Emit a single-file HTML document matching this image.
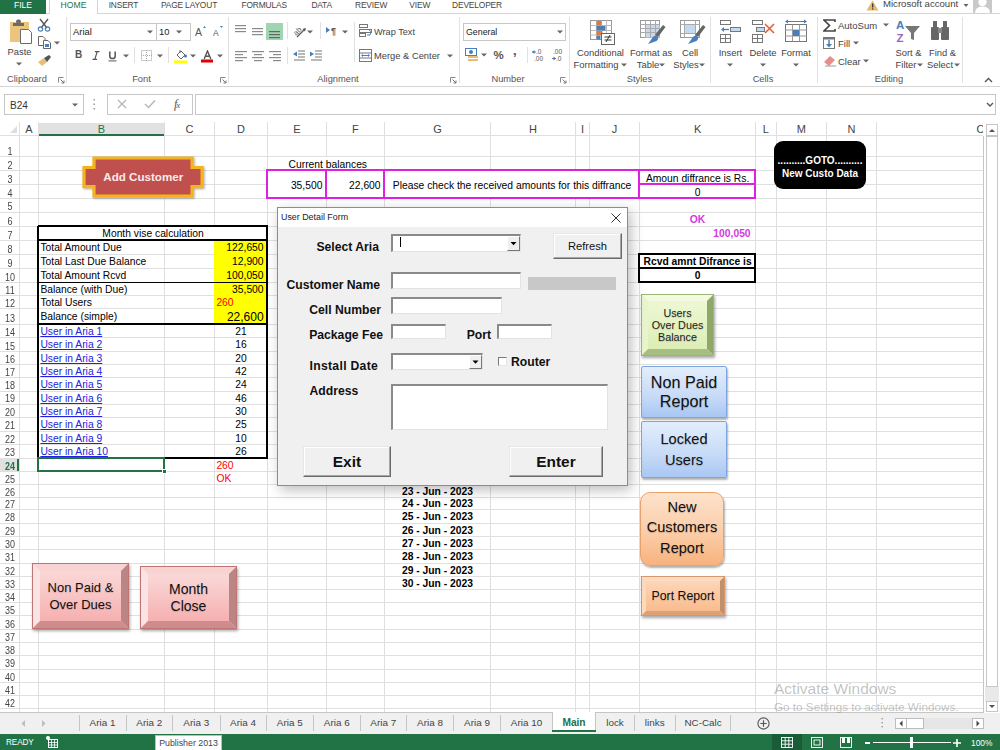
<!DOCTYPE html><html><head><meta charset="utf-8"><style>
*{margin:0;padding:0;box-sizing:border-box}
html,body{width:1000px;height:750px;overflow:hidden;background:#fff;font-family:"Liberation Sans", sans-serif;}
body{position:relative}
</style></head><body>
<svg style="position:absolute;left:0;top:0" width="1000" height="750" shape-rendering="crispEdges"><rect x="19" y="122" width="1" height="590" fill="#DFDFDF"/><rect x="38" y="122" width="1" height="590" fill="#DFDFDF"/><rect x="164" y="122" width="1" height="590" fill="#DFDFDF"/><rect x="214" y="122" width="1" height="590" fill="#DFDFDF"/><rect x="267" y="122" width="1" height="590" fill="#DFDFDF"/><rect x="326" y="122" width="1" height="590" fill="#DFDFDF"/><rect x="384" y="122" width="1" height="590" fill="#DFDFDF"/><rect x="490" y="122" width="1" height="590" fill="#DFDFDF"/><rect x="575" y="122" width="1" height="590" fill="#DFDFDF"/><rect x="589" y="122" width="1" height="590" fill="#DFDFDF"/><rect x="639" y="122" width="1" height="590" fill="#DFDFDF"/><rect x="755" y="122" width="1" height="590" fill="#DFDFDF"/><rect x="776" y="122" width="1" height="590" fill="#DFDFDF"/><rect x="826" y="122" width="1" height="590" fill="#DFDFDF"/><rect x="876" y="122" width="1" height="590" fill="#DFDFDF"/><rect x="0" y="135" width="983.5" height="1" fill="#DFDFDF"/><rect x="0" y="156" width="983.5" height="1" fill="#DFDFDF"/><rect x="0" y="170" width="983.5" height="1" fill="#DFDFDF"/><rect x="0" y="184" width="983.5" height="1" fill="#DFDFDF"/><rect x="0" y="198" width="983.5" height="1" fill="#DFDFDF"/><rect x="0" y="212" width="983.5" height="1" fill="#DFDFDF"/><rect x="0" y="226" width="983.5" height="1" fill="#DFDFDF"/><rect x="0" y="240" width="983.5" height="1" fill="#DFDFDF"/><rect x="0" y="254" width="983.5" height="1" fill="#DFDFDF"/><rect x="0" y="268" width="983.5" height="1" fill="#DFDFDF"/><rect x="0" y="282" width="983.5" height="1" fill="#DFDFDF"/><rect x="0" y="295" width="983.5" height="1" fill="#DFDFDF"/><rect x="0" y="308" width="983.5" height="1" fill="#DFDFDF"/><rect x="0" y="324" width="983.5" height="1" fill="#DFDFDF"/><rect x="0" y="337" width="983.5" height="1" fill="#DFDFDF"/><rect x="0" y="351" width="983.5" height="1" fill="#DFDFDF"/><rect x="0" y="364" width="983.5" height="1" fill="#DFDFDF"/><rect x="0" y="377" width="983.5" height="1" fill="#DFDFDF"/><rect x="0" y="391" width="983.5" height="1" fill="#DFDFDF"/><rect x="0" y="404" width="983.5" height="1" fill="#DFDFDF"/><rect x="0" y="417" width="983.5" height="1" fill="#DFDFDF"/><rect x="0" y="431" width="983.5" height="1" fill="#DFDFDF"/><rect x="0" y="444" width="983.5" height="1" fill="#DFDFDF"/><rect x="0" y="458" width="983.5" height="1" fill="#DFDFDF"/><rect x="0" y="471" width="983.5" height="1" fill="#DFDFDF"/><rect x="0" y="484" width="983.5" height="1" fill="#DFDFDF"/><rect x="0" y="497" width="983.5" height="1" fill="#DFDFDF"/><rect x="0" y="509" width="983.5" height="1" fill="#DFDFDF"/><rect x="0" y="523" width="983.5" height="1" fill="#DFDFDF"/><rect x="0" y="536" width="983.5" height="1" fill="#DFDFDF"/><rect x="0" y="549" width="983.5" height="1" fill="#DFDFDF"/><rect x="0" y="563" width="983.5" height="1" fill="#DFDFDF"/><rect x="0" y="576" width="983.5" height="1" fill="#DFDFDF"/><rect x="0" y="589" width="983.5" height="1" fill="#DFDFDF"/><rect x="0" y="602" width="983.5" height="1" fill="#DFDFDF"/><rect x="0" y="615" width="983.5" height="1" fill="#DFDFDF"/><rect x="0" y="629" width="983.5" height="1" fill="#DFDFDF"/><rect x="0" y="642" width="983.5" height="1" fill="#DFDFDF"/><rect x="0" y="655" width="983.5" height="1" fill="#DFDFDF"/><rect x="0" y="669" width="983.5" height="1" fill="#DFDFDF"/><rect x="0" y="682" width="983.5" height="1" fill="#DFDFDF"/><rect x="0" y="695" width="983.5" height="1" fill="#DFDFDF"/><rect x="0" y="708" width="983.5" height="1" fill="#DFDFDF"/></svg><div style="position:absolute;left:19.4px;top:122px;width:19.0px;height:14px;display:flex;align-items:center;justify-content:center;font-size:11px;color:#444;line-height:1">A</div><div style="position:absolute;left:39px;top:123px;width:125px;height:13px;background:#E1E1E1;border-bottom:2px solid #217346"></div><div style="position:absolute;left:38.4px;top:122px;width:126.19999999999999px;height:14px;display:flex;align-items:center;justify-content:center;font-size:11px;color:#217346;line-height:1">B</div><div style="position:absolute;left:164.6px;top:122px;width:49.80000000000001px;height:14px;display:flex;align-items:center;justify-content:center;font-size:11px;color:#444;line-height:1">C</div><div style="position:absolute;left:214.4px;top:122px;width:53.20000000000002px;height:14px;display:flex;align-items:center;justify-content:center;font-size:11px;color:#444;line-height:1">D</div><div style="position:absolute;left:267.6px;top:122px;width:58.799999999999955px;height:14px;display:flex;align-items:center;justify-content:center;font-size:11px;color:#444;line-height:1">E</div><div style="position:absolute;left:326.4px;top:122px;width:58.200000000000045px;height:14px;display:flex;align-items:center;justify-content:center;font-size:11px;color:#444;line-height:1">F</div><div style="position:absolute;left:384.6px;top:122px;width:105.79999999999995px;height:14px;display:flex;align-items:center;justify-content:center;font-size:11px;color:#444;line-height:1">G</div><div style="position:absolute;left:490.4px;top:122px;width:85.20000000000005px;height:14px;display:flex;align-items:center;justify-content:center;font-size:11px;color:#444;line-height:1">H</div><div style="position:absolute;left:575.6px;top:122px;width:14.0px;height:14px;display:flex;align-items:center;justify-content:center;font-size:11px;color:#444;line-height:1">I</div><div style="position:absolute;left:589.6px;top:122px;width:50.0px;height:14px;display:flex;align-items:center;justify-content:center;font-size:11px;color:#444;line-height:1">J</div><div style="position:absolute;left:639.6px;top:122px;width:116.0px;height:14px;display:flex;align-items:center;justify-content:center;font-size:11px;color:#444;line-height:1">K</div><div style="position:absolute;left:755.6px;top:122px;width:20.649999999999977px;height:14px;display:flex;align-items:center;justify-content:center;font-size:11px;color:#444;line-height:1">L</div><div style="position:absolute;left:776.25px;top:122px;width:50.0px;height:14px;display:flex;align-items:center;justify-content:center;font-size:11px;color:#444;line-height:1">M</div><div style="position:absolute;left:826.25px;top:122px;width:50.35000000000002px;height:14px;display:flex;align-items:center;justify-content:center;font-size:11px;color:#444;line-height:1">N</div><div style="position:absolute;left:876.6px;top:122px;width:208.39999999999998px;height:14px;display:flex;align-items:center;justify-content:center;font-size:11px;color:#444;line-height:1">O</div><svg style="position:absolute;left:0;top:122px" width="19" height="14"><polygon points="17,4 17,11 10,11" fill="#DDDDDD"/></svg><div style="position:absolute;left:0;top:136.5px;width:20px;height:21.400000000000006px;display:flex;align-items:flex-end;padding-bottom:1px;justify-content:center;font-size:10.8px;color:#444;font-weight:400;line-height:1;transform:scaleX(0.83)">1</div><div style="position:absolute;left:0;top:157.9px;width:20px;height:13.799999999999983px;display:flex;align-items:flex-end;padding-bottom:1px;justify-content:center;font-size:10.8px;color:#444;font-weight:400;line-height:1;transform:scaleX(0.83)">2</div><div style="position:absolute;left:0;top:171.7px;width:20px;height:14.0px;display:flex;align-items:flex-end;padding-bottom:1px;justify-content:center;font-size:10.8px;color:#444;font-weight:400;line-height:1;transform:scaleX(0.83)">3</div><div style="position:absolute;left:0;top:185.7px;width:20px;height:14.0px;display:flex;align-items:flex-end;padding-bottom:1px;justify-content:center;font-size:10.8px;color:#444;font-weight:400;line-height:1;transform:scaleX(0.83)">4</div><div style="position:absolute;left:0;top:199.7px;width:20px;height:13.400000000000006px;display:flex;align-items:flex-end;padding-bottom:1px;justify-content:center;font-size:10.8px;color:#444;font-weight:400;line-height:1;transform:scaleX(0.83)">5</div><div style="position:absolute;left:0;top:213.1px;width:20px;height:14.5px;display:flex;align-items:flex-end;padding-bottom:1px;justify-content:center;font-size:10.8px;color:#444;font-weight:400;line-height:1;transform:scaleX(0.83)">6</div><div style="position:absolute;left:0;top:227.6px;width:20px;height:13.900000000000006px;display:flex;align-items:flex-end;padding-bottom:1px;justify-content:center;font-size:10.8px;color:#444;font-weight:400;line-height:1;transform:scaleX(0.83)">7</div><div style="position:absolute;left:0;top:241.5px;width:20px;height:14.199999999999989px;display:flex;align-items:flex-end;padding-bottom:1px;justify-content:center;font-size:10.8px;color:#444;font-weight:400;line-height:1;transform:scaleX(0.83)">8</div><div style="position:absolute;left:0;top:255.7px;width:20px;height:13.800000000000011px;display:flex;align-items:flex-end;padding-bottom:1px;justify-content:center;font-size:10.8px;color:#444;font-weight:400;line-height:1;transform:scaleX(0.83)">9</div><div style="position:absolute;left:0;top:269.5px;width:20px;height:13.800000000000011px;display:flex;align-items:flex-end;padding-bottom:1px;justify-content:center;font-size:10.8px;color:#444;font-weight:400;line-height:1;transform:scaleX(0.83)">10</div><div style="position:absolute;left:0;top:283.3px;width:20px;height:13.099999999999966px;display:flex;align-items:flex-end;padding-bottom:1px;justify-content:center;font-size:10.8px;color:#444;font-weight:400;line-height:1;transform:scaleX(0.83)">11</div><div style="position:absolute;left:0;top:296.4px;width:20px;height:13.300000000000011px;display:flex;align-items:flex-end;padding-bottom:1px;justify-content:center;font-size:10.8px;color:#444;font-weight:400;line-height:1;transform:scaleX(0.83)">12</div><div style="position:absolute;left:0;top:309.7px;width:20px;height:15.300000000000011px;display:flex;align-items:flex-end;padding-bottom:1px;justify-content:center;font-size:10.8px;color:#444;font-weight:400;line-height:1;transform:scaleX(0.83)">13</div><div style="position:absolute;left:0;top:325.0px;width:20px;height:13.800000000000011px;display:flex;align-items:flex-end;padding-bottom:1px;justify-content:center;font-size:10.8px;color:#444;font-weight:400;line-height:1;transform:scaleX(0.83)">14</div><div style="position:absolute;left:0;top:338.8px;width:20px;height:13.5px;display:flex;align-items:flex-end;padding-bottom:1px;justify-content:center;font-size:10.8px;color:#444;font-weight:400;line-height:1;transform:scaleX(0.83)">15</div><div style="position:absolute;left:0;top:352.3px;width:20px;height:13.300000000000011px;display:flex;align-items:flex-end;padding-bottom:1px;justify-content:center;font-size:10.8px;color:#444;font-weight:400;line-height:1;transform:scaleX(0.83)">16</div><div style="position:absolute;left:0;top:365.6px;width:20px;height:13.0px;display:flex;align-items:flex-end;padding-bottom:1px;justify-content:center;font-size:10.8px;color:#444;font-weight:400;line-height:1;transform:scaleX(0.83)">17</div><div style="position:absolute;left:0;top:378.6px;width:20px;height:13.599999999999966px;display:flex;align-items:flex-end;padding-bottom:1px;justify-content:center;font-size:10.8px;color:#444;font-weight:400;line-height:1;transform:scaleX(0.83)">18</div><div style="position:absolute;left:0;top:392.2px;width:20px;height:13.100000000000023px;display:flex;align-items:flex-end;padding-bottom:1px;justify-content:center;font-size:10.8px;color:#444;font-weight:400;line-height:1;transform:scaleX(0.83)">19</div><div style="position:absolute;left:0;top:405.3px;width:20px;height:13.199999999999989px;display:flex;align-items:flex-end;padding-bottom:1px;justify-content:center;font-size:10.8px;color:#444;font-weight:400;line-height:1;transform:scaleX(0.83)">20</div><div style="position:absolute;left:0;top:418.5px;width:20px;height:13.5px;display:flex;align-items:flex-end;padding-bottom:1px;justify-content:center;font-size:10.8px;color:#444;font-weight:400;line-height:1;transform:scaleX(0.83)">21</div><div style="position:absolute;left:0;top:432.0px;width:20px;height:13.5px;display:flex;align-items:flex-end;padding-bottom:1px;justify-content:center;font-size:10.8px;color:#444;font-weight:400;line-height:1;transform:scaleX(0.83)">22</div><div style="position:absolute;left:0;top:445.5px;width:20px;height:13.600000000000023px;display:flex;align-items:flex-end;padding-bottom:1px;justify-content:center;font-size:10.8px;color:#444;font-weight:400;line-height:1;transform:scaleX(0.83)">23</div><div style="position:absolute;left:0px;top:459px;width:19px;height:12px;background:#E1E1E1;border-right:2px solid #217346"></div><div style="position:absolute;left:0;top:459.1px;width:20px;height:13.399999999999977px;display:flex;align-items:flex-end;padding-bottom:1px;justify-content:center;font-size:10.8px;color:#217346;font-weight:700;line-height:1;transform:scaleX(0.83)">24</div><div style="position:absolute;left:0;top:472.5px;width:20px;height:13.100000000000023px;display:flex;align-items:flex-end;padding-bottom:1px;justify-content:center;font-size:10.8px;color:#444;font-weight:400;line-height:1;transform:scaleX(0.83)">25</div><div style="position:absolute;left:0;top:485.6px;width:20px;height:13.199999999999989px;display:flex;align-items:flex-end;padding-bottom:1px;justify-content:center;font-size:10.8px;color:#444;font-weight:400;line-height:1;transform:scaleX(0.83)">26</div><div style="position:absolute;left:0;top:498.8px;width:20px;height:11.599999999999966px;display:flex;align-items:flex-end;padding-bottom:1px;justify-content:center;font-size:10.8px;color:#444;font-weight:400;line-height:1;transform:scaleX(0.83)">27</div><div style="position:absolute;left:0;top:510.4px;width:20px;height:13.600000000000023px;display:flex;align-items:flex-end;padding-bottom:1px;justify-content:center;font-size:10.8px;color:#444;font-weight:400;line-height:1;transform:scaleX(0.83)">28</div><div style="position:absolute;left:0;top:524.0px;width:20px;height:13.600000000000023px;display:flex;align-items:flex-end;padding-bottom:1px;justify-content:center;font-size:10.8px;color:#444;font-weight:400;line-height:1;transform:scaleX(0.83)">29</div><div style="position:absolute;left:0;top:537.6px;width:20px;height:13.299999999999955px;display:flex;align-items:flex-end;padding-bottom:1px;justify-content:center;font-size:10.8px;color:#444;font-weight:400;line-height:1;transform:scaleX(0.83)">30</div><div style="position:absolute;left:0;top:550.9px;width:20px;height:13.100000000000023px;display:flex;align-items:flex-end;padding-bottom:1px;justify-content:center;font-size:10.8px;color:#444;font-weight:400;line-height:1;transform:scaleX(0.83)">31</div><div style="position:absolute;left:0;top:564.0px;width:20px;height:13.5px;display:flex;align-items:flex-end;padding-bottom:1px;justify-content:center;font-size:10.8px;color:#444;font-weight:400;line-height:1;transform:scaleX(0.83)">32</div><div style="position:absolute;left:0;top:577.5px;width:20px;height:13.100000000000023px;display:flex;align-items:flex-end;padding-bottom:1px;justify-content:center;font-size:10.8px;color:#444;font-weight:400;line-height:1;transform:scaleX(0.83)">33</div><div style="position:absolute;left:0;top:590.6px;width:20px;height:13.100000000000023px;display:flex;align-items:flex-end;padding-bottom:1px;justify-content:center;font-size:10.8px;color:#444;font-weight:400;line-height:1;transform:scaleX(0.83)">34</div><div style="position:absolute;left:0;top:603.7px;width:20px;height:13.099999999999909px;display:flex;align-items:flex-end;padding-bottom:1px;justify-content:center;font-size:10.8px;color:#444;font-weight:400;line-height:1;transform:scaleX(0.83)">35</div><div style="position:absolute;left:0;top:616.8px;width:20px;height:13.5px;display:flex;align-items:flex-end;padding-bottom:1px;justify-content:center;font-size:10.8px;color:#444;font-weight:400;line-height:1;transform:scaleX(0.83)">36</div><div style="position:absolute;left:0;top:630.3px;width:20px;height:13.200000000000045px;display:flex;align-items:flex-end;padding-bottom:1px;justify-content:center;font-size:10.8px;color:#444;font-weight:400;line-height:1;transform:scaleX(0.83)">37</div><div style="position:absolute;left:0;top:643.5px;width:20px;height:13.0px;display:flex;align-items:flex-end;padding-bottom:1px;justify-content:center;font-size:10.8px;color:#444;font-weight:400;line-height:1;transform:scaleX(0.83)">38</div><div style="position:absolute;left:0;top:656.5px;width:20px;height:13.600000000000023px;display:flex;align-items:flex-end;padding-bottom:1px;justify-content:center;font-size:10.8px;color:#444;font-weight:400;line-height:1;transform:scaleX(0.83)">39</div><div style="position:absolute;left:0;top:670.1px;width:20px;height:13.399999999999977px;display:flex;align-items:flex-end;padding-bottom:1px;justify-content:center;font-size:10.8px;color:#444;font-weight:400;line-height:1;transform:scaleX(0.83)">40</div><div style="position:absolute;left:0;top:683.5px;width:20px;height:12.899999999999977px;display:flex;align-items:flex-end;padding-bottom:1px;justify-content:center;font-size:10.8px;color:#444;font-weight:400;line-height:1;transform:scaleX(0.83)">41</div><div style="position:absolute;left:0;top:696.4px;width:20px;height:13.300000000000068px;display:flex;align-items:flex-end;padding-bottom:1px;justify-content:center;font-size:10.8px;color:#444;font-weight:400;line-height:1;transform:scaleX(0.83)">42</div><div style="position:absolute;left:0;top:709.7px;width:20px;height:13.299999999999955px;display:flex;align-items:flex-end;padding-bottom:1px;justify-content:center;font-size:10.8px;color:#444;font-weight:400;line-height:1;transform:scaleX(0.83)">43</div><div style="position:absolute;left:984px;top:118px;width:16px;height:594px;background:#fff"></div><div style="position:absolute;left:983px;top:118px;width:2px;height:18px;background:#fff"></div><div style="position:absolute;left:983px;top:136px;width:1px;height:576px;background:#C6C6C6"></div><div style="position:absolute;left:985px;top:686px;width:14px;height:16px;background:#E9E9E9"></div><div style="position:absolute;left:986px;top:124px;width:12px;height:12px;background:#fff;border:1px solid #C6C6C6"></div><svg style="position:absolute;left:986px;top:124px" width="12" height="12"><polygon points="3,8 9,8 6,5" fill="#555"/></svg><div style="position:absolute;left:986px;top:136px;width:12px;height:551px;background:#fff;border:1px solid #C6C6C6"></div><div style="position:absolute;left:986px;top:701px;width:12px;height:11px;background:#fff;border:1px solid #C6C6C6"></div><svg style="position:absolute;left:986px;top:701px" width="12" height="11"><polygon points="3,4 9,4 6,7" fill="#555"/></svg><div style="position:absolute;left:39px;top:227px;width:228px;height:13px;background:#fff"></div><div style="position:absolute;left:268px;top:171px;width:58px;height:27px;background:#fff"></div><div style="position:absolute;left:327px;top:171px;width:57px;height:27px;background:#fff"></div><div style="position:absolute;left:385px;top:171px;width:254px;height:27px;background:#fff"></div><div style="position:absolute;left:268px;top:157px;width:100px;height:13px;background:#fff"></div><div style="position:absolute;left:214px;top:240px;width:53px;height:84px;background:#FFFF00"></div><div style="position:absolute;left:40.4px;top:227.6px;width:225.20000000000002px;height:13.900000000000006px;display:flex;align-items:center;justify-content:center;font-size:10.3px;color:#000;font-weight:400;white-space:nowrap;line-height:1;">Month vise calculation</div><div style="position:absolute;left:40.4px;top:241.5px;width:122.19999999999999px;height:14.199999999999989px;display:flex;align-items:center;justify-content:flex-start;font-size:10.3px;color:#000;font-weight:400;white-space:nowrap;line-height:1;">Total Amount Due</div><div style="position:absolute;left:218.4px;top:241.5px;width:45.20000000000002px;height:14.199999999999989px;display:flex;align-items:center;justify-content:flex-end;font-size:10.3px;color:#000;font-weight:400;white-space:nowrap;line-height:1;">122,650</div><div style="position:absolute;left:40.4px;top:255.7px;width:122.19999999999999px;height:13.800000000000011px;display:flex;align-items:center;justify-content:flex-start;font-size:10.3px;color:#000;font-weight:400;white-space:nowrap;line-height:1;">Total Last Due Balance</div><div style="position:absolute;left:218.4px;top:255.7px;width:45.20000000000002px;height:13.800000000000011px;display:flex;align-items:center;justify-content:flex-end;font-size:10.3px;color:#000;font-weight:400;white-space:nowrap;line-height:1;">12,900</div><div style="position:absolute;left:40.4px;top:269.5px;width:122.19999999999999px;height:13.800000000000011px;display:flex;align-items:center;justify-content:flex-start;font-size:10.3px;color:#000;font-weight:400;white-space:nowrap;line-height:1;">Total Amount Rcvd</div><div style="position:absolute;left:218.4px;top:269.5px;width:45.20000000000002px;height:13.800000000000011px;display:flex;align-items:center;justify-content:flex-end;font-size:10.3px;color:#000;font-weight:400;white-space:nowrap;line-height:1;">100,050</div><div style="position:absolute;left:40.4px;top:283.3px;width:122.19999999999999px;height:13.099999999999966px;display:flex;align-items:center;justify-content:flex-start;font-size:10.3px;color:#000;font-weight:400;white-space:nowrap;line-height:1;">Balance (with Due)</div><div style="position:absolute;left:218.4px;top:283.3px;width:45.20000000000002px;height:13.099999999999966px;display:flex;align-items:center;justify-content:flex-end;font-size:10.3px;color:#000;font-weight:400;white-space:nowrap;line-height:1;">35,500</div><div style="position:absolute;left:40.4px;top:296.4px;width:122.19999999999999px;height:13.300000000000011px;display:flex;align-items:center;justify-content:flex-start;font-size:10.3px;color:#000;font-weight:400;white-space:nowrap;line-height:1;">Total Users</div><div style="position:absolute;left:216.4px;top:296.4px;width:49.20000000000002px;height:13.300000000000011px;display:flex;align-items:center;justify-content:flex-start;font-size:10.3px;color:#FF0000;font-weight:400;white-space:nowrap;line-height:1;">260</div><div style="position:absolute;left:40.4px;top:309.7px;width:122.19999999999999px;height:15.300000000000011px;display:flex;align-items:center;justify-content:flex-start;font-size:10.3px;color:#000;font-weight:400;white-space:nowrap;line-height:1;">Balance (simple)</div><div style="position:absolute;left:218.4px;top:309.7px;width:45.20000000000002px;height:15.300000000000011px;display:flex;align-items:center;justify-content:flex-end;font-size:12px;color:#000;font-weight:400;white-space:nowrap;line-height:1;">22,600</div><div style="position:absolute;left:38px;top:225px;width:230px;height:2px;background:#000"></div><div style="position:absolute;left:38px;top:239px;width:230px;height:2px;background:#000"></div><div style="position:absolute;left:38px;top:282px;width:230px;height:1px;background:#000"></div><div style="position:absolute;left:38px;top:323px;width:230px;height:2px;background:#000"></div><div style="position:absolute;left:37px;top:226px;width:2px;height:99px;background:#000"></div><div style="position:absolute;left:266px;top:226px;width:2px;height:99px;background:#000"></div><div style="position:absolute;left:40.4px;top:325.0px;width:122.19999999999999px;height:13.800000000000011px;display:flex;align-items:center;justify-content:flex-start;font-size:10.3px;color:#2222DD;font-weight:400;white-space:nowrap;line-height:1;text-decoration:underline">User in Aria 1</div><div style="position:absolute;left:216.4px;top:325.0px;width:49.20000000000002px;height:13.800000000000011px;display:flex;align-items:center;justify-content:center;font-size:10.3px;color:#000;font-weight:400;white-space:nowrap;line-height:1;">21</div><div style="position:absolute;left:40.4px;top:338.8px;width:122.19999999999999px;height:13.5px;display:flex;align-items:center;justify-content:flex-start;font-size:10.3px;color:#2222DD;font-weight:400;white-space:nowrap;line-height:1;text-decoration:underline">User in Aria 2</div><div style="position:absolute;left:216.4px;top:338.8px;width:49.20000000000002px;height:13.5px;display:flex;align-items:center;justify-content:center;font-size:10.3px;color:#000;font-weight:400;white-space:nowrap;line-height:1;">16</div><div style="position:absolute;left:40.4px;top:352.3px;width:122.19999999999999px;height:13.300000000000011px;display:flex;align-items:center;justify-content:flex-start;font-size:10.3px;color:#2222DD;font-weight:400;white-space:nowrap;line-height:1;text-decoration:underline">User in Aria 3</div><div style="position:absolute;left:216.4px;top:352.3px;width:49.20000000000002px;height:13.300000000000011px;display:flex;align-items:center;justify-content:center;font-size:10.3px;color:#000;font-weight:400;white-space:nowrap;line-height:1;">20</div><div style="position:absolute;left:40.4px;top:365.6px;width:122.19999999999999px;height:13.0px;display:flex;align-items:center;justify-content:flex-start;font-size:10.3px;color:#2222DD;font-weight:400;white-space:nowrap;line-height:1;text-decoration:underline">User in Aria 4</div><div style="position:absolute;left:216.4px;top:365.6px;width:49.20000000000002px;height:13.0px;display:flex;align-items:center;justify-content:center;font-size:10.3px;color:#000;font-weight:400;white-space:nowrap;line-height:1;">42</div><div style="position:absolute;left:40.4px;top:378.6px;width:122.19999999999999px;height:13.599999999999966px;display:flex;align-items:center;justify-content:flex-start;font-size:10.3px;color:#2222DD;font-weight:400;white-space:nowrap;line-height:1;text-decoration:underline">User in Aria 5</div><div style="position:absolute;left:216.4px;top:378.6px;width:49.20000000000002px;height:13.599999999999966px;display:flex;align-items:center;justify-content:center;font-size:10.3px;color:#000;font-weight:400;white-space:nowrap;line-height:1;">24</div><div style="position:absolute;left:40.4px;top:392.2px;width:122.19999999999999px;height:13.100000000000023px;display:flex;align-items:center;justify-content:flex-start;font-size:10.3px;color:#2222DD;font-weight:400;white-space:nowrap;line-height:1;text-decoration:underline">User in Aria 6</div><div style="position:absolute;left:216.4px;top:392.2px;width:49.20000000000002px;height:13.100000000000023px;display:flex;align-items:center;justify-content:center;font-size:10.3px;color:#000;font-weight:400;white-space:nowrap;line-height:1;">46</div><div style="position:absolute;left:40.4px;top:405.3px;width:122.19999999999999px;height:13.199999999999989px;display:flex;align-items:center;justify-content:flex-start;font-size:10.3px;color:#2222DD;font-weight:400;white-space:nowrap;line-height:1;text-decoration:underline">User in Aria 7</div><div style="position:absolute;left:216.4px;top:405.3px;width:49.20000000000002px;height:13.199999999999989px;display:flex;align-items:center;justify-content:center;font-size:10.3px;color:#000;font-weight:400;white-space:nowrap;line-height:1;">30</div><div style="position:absolute;left:40.4px;top:418.5px;width:122.19999999999999px;height:13.5px;display:flex;align-items:center;justify-content:flex-start;font-size:10.3px;color:#2222DD;font-weight:400;white-space:nowrap;line-height:1;text-decoration:underline">User in Aria 8</div><div style="position:absolute;left:216.4px;top:418.5px;width:49.20000000000002px;height:13.5px;display:flex;align-items:center;justify-content:center;font-size:10.3px;color:#000;font-weight:400;white-space:nowrap;line-height:1;">25</div><div style="position:absolute;left:40.4px;top:432.0px;width:122.19999999999999px;height:13.5px;display:flex;align-items:center;justify-content:flex-start;font-size:10.3px;color:#2222DD;font-weight:400;white-space:nowrap;line-height:1;text-decoration:underline">User in Aria 9</div><div style="position:absolute;left:216.4px;top:432.0px;width:49.20000000000002px;height:13.5px;display:flex;align-items:center;justify-content:center;font-size:10.3px;color:#000;font-weight:400;white-space:nowrap;line-height:1;">10</div><div style="position:absolute;left:40.4px;top:445.5px;width:122.19999999999999px;height:13.600000000000023px;display:flex;align-items:center;justify-content:flex-start;font-size:10.3px;color:#2222DD;font-weight:400;white-space:nowrap;line-height:1;text-decoration:underline">User in Aria 10</div><div style="position:absolute;left:216.4px;top:445.5px;width:49.20000000000002px;height:13.600000000000023px;display:flex;align-items:center;justify-content:center;font-size:10.3px;color:#000;font-weight:400;white-space:nowrap;line-height:1;">26</div><div style="position:absolute;left:38px;top:457px;width:230px;height:2px;background:#000"></div><div style="position:absolute;left:37px;top:324px;width:2px;height:135px;background:#000"></div><div style="position:absolute;left:266px;top:324px;width:2px;height:135px;background:#000"></div><div style="position:absolute;left:216.4px;top:459.1px;width:49.20000000000002px;height:13.399999999999977px;display:flex;align-items:center;justify-content:flex-start;font-size:10.3px;color:#FF0000;font-weight:400;white-space:nowrap;line-height:1;">260</div><div style="position:absolute;left:216.4px;top:472.5px;width:49.20000000000002px;height:13.100000000000023px;display:flex;align-items:center;justify-content:flex-start;font-size:10.3px;color:#FF0000;font-weight:400;white-space:nowrap;line-height:1;">OK</div><div style="position:absolute;left:37px;top:457px;width:128px;height:15px;border:2px solid #217346"></div><div style="position:absolute;left:162px;top:469px;width:5px;height:5px;background:#217346;border:1px solid #fff"></div><div style="position:absolute;left:288.6px;top:157.9px;width:75.0px;height:13.799999999999983px;display:flex;align-items:center;justify-content:flex-start;font-size:10.3px;color:#000;font-weight:;white-space:nowrap;line-height:1;">Current balances</div><div style="position:absolute;left:271.6px;top:171.7px;width:50.799999999999955px;height:28.0px;display:flex;align-items:center;justify-content:flex-end;font-size:10.3px;color:#000;font-weight:;white-space:nowrap;line-height:1;">35,500</div><div style="position:absolute;left:330.4px;top:171.7px;width:50.200000000000045px;height:28.0px;display:flex;align-items:center;justify-content:flex-end;font-size:10.3px;color:#000;font-weight:;white-space:nowrap;line-height:1;">22,600</div><div style="position:absolute;left:386.6px;top:171.7px;width:251.0px;height:28.0px;display:flex;align-items:center;justify-content:center;font-size:10.3px;color:#000;font-weight:400;white-space:nowrap;line-height:1;">Please check the received amounts for this diffrance</div><div style="position:absolute;left:266px;top:169px;width:61px;height:30px;border:2px solid #E020E0"></div><div style="position:absolute;left:325px;top:169px;width:60px;height:30px;border:2px solid #E020E0"></div><div style="position:absolute;left:383px;top:169px;width:257px;height:30px;border:2px solid #E020E0"></div><div style="position:absolute;left:641.6px;top:171.7px;width:112.0px;height:14.0px;display:flex;align-items:center;justify-content:center;font-size:10.3px;color:#000;font-weight:400;white-space:nowrap;line-height:1;">Amoun diffrance is Rs.</div><div style="position:absolute;left:641.6px;top:185.7px;width:112.0px;height:14.0px;display:flex;align-items:center;justify-content:center;font-size:10.3px;color:#000;font-weight:400;white-space:nowrap;line-height:1;">0</div><div style="position:absolute;left:638px;top:169px;width:118px;height:16px;border:2px solid #E020E0"></div><div style="position:absolute;left:638px;top:183px;width:118px;height:16px;border:2px solid #E020E0"></div><div style="position:absolute;left:641.6px;top:213.1px;width:112.0px;height:14.5px;display:flex;align-items:center;justify-content:center;font-size:10.3px;color:#D238DE;font-weight:700;white-space:nowrap;line-height:1;">OK</div><div style="position:absolute;left:644.6px;top:227.6px;width:106.0px;height:13.900000000000006px;display:flex;align-items:center;justify-content:flex-end;font-size:10.3px;color:#D238DE;font-weight:700;white-space:nowrap;line-height:1;">100,050</div><div style="position:absolute;left:641.6px;top:255.7px;width:112.0px;height:13.800000000000011px;display:flex;align-items:center;justify-content:center;font-size:10.3px;color:#000;font-weight:700;white-space:nowrap;line-height:1;">Rcvd amnt Difrance is</div><div style="position:absolute;left:641.6px;top:269.5px;width:112.0px;height:13.800000000000011px;display:flex;align-items:center;justify-content:center;font-size:10.3px;color:#000;font-weight:700;white-space:nowrap;line-height:1;">0</div><div style="position:absolute;left:638px;top:253px;width:118px;height:16px;border:2px solid #000"></div><div style="position:absolute;left:638px;top:267px;width:118px;height:16px;border:2px solid #000"></div><div style="position:absolute;left:386.6px;top:485.6px;width:101.79999999999995px;height:13.199999999999989px;display:flex;align-items:center;justify-content:center;font-size:10.3px;color:#000;font-weight:700;white-space:nowrap;line-height:1;">23 - Jun - 2023</div><div style="position:absolute;left:386.6px;top:498.8px;width:101.79999999999995px;height:11.599999999999966px;display:flex;align-items:center;justify-content:center;font-size:10.3px;color:#000;font-weight:700;white-space:nowrap;line-height:1;">24 - Jun - 2023</div><div style="position:absolute;left:386.6px;top:510.4px;width:101.79999999999995px;height:13.600000000000023px;display:flex;align-items:center;justify-content:center;font-size:10.3px;color:#000;font-weight:700;white-space:nowrap;line-height:1;">25 - Jun - 2023</div><div style="position:absolute;left:386.6px;top:524.0px;width:101.79999999999995px;height:13.600000000000023px;display:flex;align-items:center;justify-content:center;font-size:10.3px;color:#000;font-weight:700;white-space:nowrap;line-height:1;">26 - Jun - 2023</div><div style="position:absolute;left:386.6px;top:537.6px;width:101.79999999999995px;height:13.299999999999955px;display:flex;align-items:center;justify-content:center;font-size:10.3px;color:#000;font-weight:700;white-space:nowrap;line-height:1;">27 - Jun - 2023</div><div style="position:absolute;left:386.6px;top:550.9px;width:101.79999999999995px;height:13.100000000000023px;display:flex;align-items:center;justify-content:center;font-size:10.3px;color:#000;font-weight:700;white-space:nowrap;line-height:1;">28 - Jun - 2023</div><div style="position:absolute;left:386.6px;top:564.0px;width:101.79999999999995px;height:13.5px;display:flex;align-items:center;justify-content:center;font-size:10.3px;color:#000;font-weight:700;white-space:nowrap;line-height:1;">29 - Jun - 2023</div><div style="position:absolute;left:386.6px;top:577.5px;width:101.79999999999995px;height:13.100000000000023px;display:flex;align-items:center;justify-content:center;font-size:10.3px;color:#000;font-weight:700;white-space:nowrap;line-height:1;">30 - Jun - 2023</div><svg style="position:absolute;left:84.2px;top:158px;overflow:visible;filter:drop-shadow(1px 1.5px 1px rgba(0,0,0,0.3))" width="118.10000000000001" height="38.099999999999994"><polygon points="10,0 108.10000000000001,0 108.10000000000001,9.5 118.10000000000001,9.5 118.10000000000001,28.599999999999994 108.10000000000001,28.599999999999994 108.10000000000001,38.099999999999994 10,38.099999999999994 10,28.599999999999994 0,28.599999999999994 0,9.5 10,9.5" fill="#C0504D" stroke="#F5B41E" stroke-width="3.2" stroke-linejoin="miter" transform="translate(0,0)"/></svg><div style="position:absolute;left:84.2px;top:158px;width:118.10000000000001px;height:38.099999999999994px;display:flex;align-items:center;justify-content:center;font-size:11.6px;font-weight:700;color:#FBEAEA;line-height:1">Add Customer</div><div style="position:absolute;left:774px;top:141px;width:92px;height:48px;background:#000;border-radius:9px"></div><div style="position:absolute;left:774px;top:154px;width:92px;text-align:center;font-size:10px;font-weight:700;color:#fff;line-height:13px;white-space:nowrap">..........GOTO..........<br>New Custo Data</div><svg style="position:absolute;left:641px;top:294px;overflow:visible;filter:drop-shadow(1px 2px 1.5px rgba(0,0,0,0.35));" width="73" height="62"><rect x="0" y="0" width="73" height="62" fill="#EDF8D3"/><polygon points="0,0 73,0 66,7 7,7" fill="#F3FADF"/><polygon points="0,0 7,7 7,55 0,62" fill="#E8F4CB"/><polygon points="73,0 73,62 66,55 66,7" fill="#8FA869"/><polygon points="0,62 7,55 66,55 73,62" fill="#A6BF80"/><rect x="7" y="7" width="59" height="48" fill="url(#g641294)"/><defs><linearGradient id="g641294" x1="0" y1="0" x2="0" y2="1"><stop offset="0" stop-color="#EDF8D3"/><stop offset="1" stop-color="#DCEEB6"/></linearGradient></defs><rect x="0.5" y="0.5" width="72" height="61" fill="none" stroke="#9DB573" stroke-width="1"/></svg><div style="position:absolute;left:641px;top:294px;width:73px;height:62px;display:flex;align-items:center;justify-content:center;text-align:center;font-size:10.8px;line-height:12.3px;color:#222;white-space:nowrap;text-shadow:0 1px 1px rgba(0,0,0,0.15)">Users<br>Over Dues<br>Balance</div><div style="position:absolute;left:641px;top:366px;width:86px;height:52px;border:1px solid #7EA6DE;border-radius:2px;background:linear-gradient(#E3EEFC,#C6DAF7 60%,#A9C7F3);box-shadow:1px 2px 2px rgba(0,0,0,0.3);display:flex;align-items:center;justify-content:center;text-align:center;font-size:16.2px;line-height:19.5px;color:#111;white-space:nowrap;text-shadow:0 1px 1px rgba(0,0,0,0.2)">Non Paid<br>Report</div><div style="position:absolute;left:641px;top:421px;width:86px;height:57px;border:1px solid #7EA6DE;border-radius:2px;background:linear-gradient(#E3EEFC,#C6DAF7 60%,#A9C7F3);box-shadow:1px 2px 2px rgba(0,0,0,0.3);display:flex;align-items:center;justify-content:center;text-align:center;font-size:14.6px;line-height:20.5px;color:#111;white-space:nowrap;text-shadow:0 1px 1px rgba(0,0,0,0.2)">Locked<br>Users</div><div style="position:absolute;left:640px;top:492px;width:84px;height:74px;border:1px solid #E9A26B;border-radius:10px;background:linear-gradient(#FDE2CC,#FBCDA8 55%,#F8B27D);box-shadow:1px 2px 2px rgba(0,0,0,0.3);display:flex;align-items:center;justify-content:center;text-align:center;font-size:14.6px;line-height:20.2px;padding-bottom:3px;color:#111;white-space:nowrap;text-shadow:0 1px 1px rgba(0,0,0,0.2)">New<br>Customers<br>Report</div><svg style="position:absolute;left:641px;top:576px;overflow:visible;filter:drop-shadow(1px 2px 1.5px rgba(0,0,0,0.35));" width="84" height="40"><rect x="0" y="0" width="84" height="40" fill="#FCD6B8"/><polygon points="0,0 84,0 79,5 5,5" fill="#FDDCC2"/><polygon points="0,0 5,5 5,35 0,40" fill="#FCD8BC"/><polygon points="84,0 84,40 79,35 79,5" fill="#C08F6C"/><polygon points="0,40 5,35 79,35 84,40" fill="#DDA077"/><rect x="5" y="5" width="74" height="30" fill="url(#g641576)"/><defs><linearGradient id="g641576" x1="0" y1="0" x2="0" y2="1"><stop offset="0" stop-color="#FCD6B8"/><stop offset="1" stop-color="#F9BC8E"/></linearGradient></defs><rect x="0.5" y="0.5" width="83" height="39" fill="none" stroke="#D8966A" stroke-width="1"/></svg><div style="position:absolute;left:641px;top:576px;width:84px;height:40px;display:flex;align-items:center;justify-content:center;text-align:center;font-size:12.3px;line-height:14px;color:#111;white-space:nowrap;text-shadow:0 1px 1px rgba(0,0,0,0.15)">Port Report</div><svg style="position:absolute;left:32px;top:563px;overflow:visible;filter:drop-shadow(1px 2px 1.5px rgba(0,0,0,0.35));" width="97" height="66"><rect x="0" y="0" width="97" height="66" fill="#FAD8D8"/><polygon points="0,0 97,0 89,8 8,8" fill="#F9D2D2"/><polygon points="0,0 8,8 8,58 0,66" fill="#FCE3E3"/><polygon points="97,0 97,66 89,58 89,8" fill="#BC8585"/><polygon points="0,66 8,58 89,58 97,66" fill="#CF8C8C"/><rect x="8" y="8" width="81" height="50" fill="url(#g32563)"/><defs><linearGradient id="g32563" x1="0" y1="0" x2="0" y2="1"><stop offset="0" stop-color="#FAD8D8"/><stop offset="1" stop-color="#F6B0B0"/></linearGradient></defs><rect x="0.5" y="0.5" width="96" height="65" fill="none" stroke="#C07575" stroke-width="1"/></svg><div style="position:absolute;left:32px;top:563px;width:97px;height:66px;display:flex;align-items:center;justify-content:center;text-align:center;font-size:13px;line-height:17.5px;color:#111;white-space:nowrap;text-shadow:0 1px 1px rgba(0,0,0,0.15)">Non Paid &amp;<br>Over Dues</div><svg style="position:absolute;left:140px;top:566px;overflow:visible;filter:drop-shadow(1px 2px 1.5px rgba(0,0,0,0.35));" width="97" height="63"><rect x="0" y="0" width="97" height="63" fill="#FAD8D8"/><polygon points="0,0 97,0 89,8 8,8" fill="#F9D2D2"/><polygon points="0,0 8,8 8,55 0,63" fill="#FCE3E3"/><polygon points="97,0 97,63 89,55 89,8" fill="#BC8585"/><polygon points="0,63 8,55 89,55 97,63" fill="#CF8C8C"/><rect x="8" y="8" width="81" height="47" fill="url(#g140566)"/><defs><linearGradient id="g140566" x1="0" y1="0" x2="0" y2="1"><stop offset="0" stop-color="#FAD8D8"/><stop offset="1" stop-color="#F6B0B0"/></linearGradient></defs><rect x="0.5" y="0.5" width="96" height="62" fill="none" stroke="#C07575" stroke-width="1"/></svg><div style="position:absolute;left:140px;top:566px;width:97px;height:63px;display:flex;align-items:center;justify-content:center;text-align:center;font-size:14px;line-height:16.5px;color:#111;white-space:nowrap;text-shadow:0 1px 1px rgba(0,0,0,0.15)">Month<br>Close</div><div style="position:absolute;left:277px;top:207px;width:351px;height:279px;background:#F0F0F0;border:1px solid #8C8C8C;box-shadow:3px 4px 12px rgba(0,0,0,0.26)"></div><div style="position:absolute;left:278px;top:208px;width:349px;height:19px;background:#fff"></div><div style="position:absolute;left:281px;top:213px;font-size:8.9px;color:#222;font-weight:400;white-space:nowrap;line-height:1;">User Detail Form</div><svg style="position:absolute;left:611px;top:213px" width="10" height="10"><path d="M0.5,0.5 L9.5,9.5 M9.5,0.5 L0.5,9.5" stroke="#333" stroke-width="1" fill="none"/></svg><div style="position:absolute;right:621px;top:241.13px;font-size:12.2px;font-weight:700;color:#111;line-height:1;white-space:nowrap;text-align:right">Select Aria</div><div style="position:absolute;right:620px;top:278.63px;font-size:12.2px;font-weight:700;color:#111;line-height:1;white-space:nowrap;text-align:right">Customer Name</div><div style="position:absolute;right:619px;top:303.63px;font-size:12.2px;font-weight:700;color:#111;line-height:1;white-space:nowrap;text-align:right">Cell Number</div><div style="position:absolute;right:617px;top:328.63px;font-size:12.2px;font-weight:700;color:#111;line-height:1;white-space:nowrap;text-align:right">Package Fee</div><div style="position:absolute;right:509px;top:328.63px;font-size:12.2px;font-weight:700;color:#111;line-height:1;white-space:nowrap;text-align:right">Port</div><div style="position:absolute;left:309.5px;top:360.13px;font-size:12.2px;font-weight:700;color:#111;line-height:1;white-space:nowrap;letter-spacing:0.3px">Install Date</div><div style="position:absolute;left:309.5px;top:385.13px;font-size:12.2px;font-weight:700;color:#111;line-height:1;white-space:nowrap">Address</div><div style="position:absolute;left:511px;top:356.13px;font-size:12.2px;font-weight:700;color:#111;line-height:1;white-space:nowrap">Router</div><div style="position:absolute;left:391px;top:234px;width:130px;height:18px;background:#fff;border-top:2px solid #8A8A8A;border-left:2px solid #8A8A8A;border-right:1px solid #E3E3E3;border-bottom:1px solid #E3E3E3"></div><div style="position:absolute;left:507px;top:236px;width:13px;height:15px;background:#F0F0F0;border-top:1px solid #fff;border-left:1px solid #fff;border-right:1px solid #777;border-bottom:1px solid #777"></div><svg style="position:absolute;left:507px;top:236px" width="13" height="15"><polygon points="3.5,6.0 9.5,6.0 6.5,9.3" fill="#000"/></svg><div style="position:absolute;left:400px;top:237px;width:1px;height:10px;background:#000"></div><div style="position:absolute;left:391px;top:272px;width:130px;height:17px;background:#fff;border-top:2px solid #8A8A8A;border-left:2px solid #8A8A8A;border-right:1px solid #E3E3E3;border-bottom:1px solid #E3E3E3"></div><div style="position:absolute;left:528px;top:277px;width:88px;height:13px;background:#C8C8C8"></div><div style="position:absolute;left:391px;top:297px;width:111px;height:17px;background:#fff;border-top:2px solid #8A8A8A;border-left:2px solid #8A8A8A;border-right:1px solid #E3E3E3;border-bottom:1px solid #E3E3E3"></div><div style="position:absolute;left:391px;top:324px;width:55px;height:15px;background:#fff;border-top:2px solid #8A8A8A;border-left:2px solid #8A8A8A;border-right:1px solid #E3E3E3;border-bottom:1px solid #E3E3E3"></div><div style="position:absolute;left:497px;top:324px;width:55px;height:15px;background:#fff;border-top:2px solid #8A8A8A;border-left:2px solid #8A8A8A;border-right:1px solid #E3E3E3;border-bottom:1px solid #E3E3E3"></div><div style="position:absolute;left:391px;top:353px;width:92px;height:17px;background:#fff;border-top:2px solid #8A8A8A;border-left:2px solid #8A8A8A;border-right:1px solid #E3E3E3;border-bottom:1px solid #E3E3E3"></div><div style="position:absolute;left:469px;top:355px;width:13px;height:14px;background:#F0F0F0;border-top:1px solid #fff;border-left:1px solid #fff;border-right:1px solid #777;border-bottom:1px solid #777"></div><svg style="position:absolute;left:469px;top:355px" width="13" height="14"><polygon points="3.5,5.5 9.5,5.5 6.5,8.8" fill="#000"/></svg><div style="position:absolute;left:498px;top:357px;width:9px;height:9px;background:#fff;border-top:1px solid #777;border-left:1px solid #777;border-right:1px solid #E8E8E8;border-bottom:1px solid #E8E8E8"></div><div style="position:absolute;left:391px;top:384px;width:217px;height:46px;background:#fff;border-top:2px solid #8A8A8A;border-left:2px solid #8A8A8A;border-right:1px solid #E3E3E3;border-bottom:1px solid #E3E3E3"></div><div style="position:absolute;left:553px;top:233px;width:69px;height:26px;background:#F0F0F0;border-top:1px solid #E6E6E6;border-left:1px solid #E6E6E6;border-right:1px solid #6A6A6A;border-bottom:1px solid #6A6A6A;box-shadow:inset -1px -1px 0 #A6A6A6, inset 1px 1px 0 #FFFFFF"></div><div style="position:absolute;left:553px;top:234px;width:69px;height:26px;display:flex;align-items:center;justify-content:center;font-size:11.2px;font-weight:400;color:#111;line-height:1">Refresh</div><div style="position:absolute;left:303px;top:446px;width:88px;height:31px;background:#F0F0F0;border-top:1px solid #E6E6E6;border-left:1px solid #E6E6E6;border-right:1px solid #6A6A6A;border-bottom:1px solid #6A6A6A;box-shadow:inset -1px -1px 0 #A6A6A6, inset 1px 1px 0 #FFFFFF"></div><div style="position:absolute;left:303px;top:446px;width:88px;height:31px;display:flex;align-items:center;justify-content:center;font-size:15.5px;font-weight:700;color:#111;line-height:1">Exit</div><div style="position:absolute;left:509px;top:446px;width:94px;height:31px;background:#F0F0F0;border-top:1px solid #E6E6E6;border-left:1px solid #E6E6E6;border-right:1px solid #6A6A6A;border-bottom:1px solid #6A6A6A;box-shadow:inset -1px -1px 0 #A6A6A6, inset 1px 1px 0 #FFFFFF"></div><div style="position:absolute;left:509px;top:446px;width:94px;height:31px;display:flex;align-items:center;justify-content:center;font-size:15.4px;font-weight:700;color:#111;line-height:1">Enter</div><div style="position:absolute;left:0px;top:0px;width:1000px;height:122px;background:#fff"></div><div style="position:absolute;left:0px;top:13px;width:1000px;height:1px;background:#D5D5D5"></div><div style="position:absolute;left:0px;top:0px;width:46px;height:14px;background:#217346"></div><div style="position:absolute;left:0;top:1px;width:46px;text-align:center;font-size:8.6px;color:#fff;line-height:1">FILE</div><div style="position:absolute;left:49px;top:0px;width:49px;height:14px;background:#fff;border-left:1px solid #D5D5D5;border-right:1px solid #D5D5D5"></div><div style="position:absolute;left:49px;top:1px;width:49px;text-align:center;font-size:8.6px;color:#217346;line-height:1">HOME</div><div style="position:absolute;left:99px;top:1px;width:49px;text-align:center;font-size:8.4px;color:#444;line-height:1;white-space:nowrap;letter-spacing:-0.15px">INSERT</div><div style="position:absolute;left:150px;top:1px;width:78px;text-align:center;font-size:8.4px;color:#444;line-height:1;white-space:nowrap;letter-spacing:-0.15px">PAGE LAYOUT</div><div style="position:absolute;left:230px;top:1px;width:68.39999999999998px;text-align:center;font-size:8.4px;color:#444;line-height:1;white-space:nowrap;letter-spacing:-0.15px">FORMULAS</div><div style="position:absolute;left:301px;top:1px;width:41.30000000000001px;text-align:center;font-size:8.4px;color:#444;line-height:1;white-space:nowrap;letter-spacing:-0.15px">DATA</div><div style="position:absolute;left:345.5px;top:1px;width:51.19999999999999px;text-align:center;font-size:8.4px;color:#444;line-height:1;white-space:nowrap;letter-spacing:-0.15px">REVIEW</div><div style="position:absolute;left:399.5px;top:1px;width:40.5px;text-align:center;font-size:8.4px;color:#444;line-height:1;white-space:nowrap;letter-spacing:-0.15px">VIEW</div><div style="position:absolute;left:443px;top:1px;width:68px;text-align:center;font-size:8.4px;color:#444;line-height:1;white-space:nowrap;letter-spacing:-0.15px">DEVELOPER</div><svg style="position:absolute;left:866px;top:0px" width="13" height="11"><polygon points="6.5,0.5 12.5,10.5 0.5,10.5" fill="#E5B96A"/><rect x="6" y="3.5" width="1.3" height="4" fill="#3a3a3a"/><rect x="6" y="8.3" width="1.3" height="1.3" fill="#3a3a3a"/></svg><div style="position:absolute;left:883px;top:-1px;font-size:9.6px;color:#444;line-height:1;white-space:nowrap">Microsoft account</div><svg style="position:absolute;left:963px;top:3px" width="7" height="5"><polygon points="0.5,1 5.5,1 3,4" fill="#666"/></svg><svg style="position:absolute;left:973px;top:0px" width="19" height="13"><rect width="19" height="13" fill="#C9C9C9"/><circle cx="9.5" cy="2" r="4.2" fill="#fff"/><path d="M2,13 Q2,6.5 9.5,6.5 Q17,6.5 17,13 Z" fill="#fff"/></svg><div style="position:absolute;left:0px;top:86px;width:1000px;height:1px;background:#D5D5D5"></div><div style="position:absolute;left:66px;top:17px;width:1px;height:66px;background:#E1E1E1"></div><div style="position:absolute;left:228px;top:17px;width:1px;height:66px;background:#E1E1E1"></div><div style="position:absolute;left:459px;top:17px;width:1px;height:66px;background:#E1E1E1"></div><div style="position:absolute;left:569px;top:17px;width:1px;height:66px;background:#E1E1E1"></div><div style="position:absolute;left:710px;top:17px;width:1px;height:66px;background:#E1E1E1"></div><div style="position:absolute;left:817px;top:17px;width:1px;height:66px;background:#E1E1E1"></div><div style="position:absolute;left:962px;top:17px;width:1px;height:66px;background:#E1E1E1"></div><div style="position:absolute;left:-13px;top:75px;width:80px;text-align:center;font-size:9.3px;color:#555;line-height:1;white-space:nowrap">Clipboard</div><div style="position:absolute;left:101.5px;top:75px;width:80px;text-align:center;font-size:9.3px;color:#555;line-height:1;white-space:nowrap">Font</div><div style="position:absolute;left:298px;top:75px;width:80px;text-align:center;font-size:9.3px;color:#555;line-height:1;white-space:nowrap">Alignment</div><div style="position:absolute;left:468px;top:75px;width:80px;text-align:center;font-size:9.3px;color:#555;line-height:1;white-space:nowrap">Number</div><div style="position:absolute;left:599.5px;top:75px;width:80px;text-align:center;font-size:9.3px;color:#555;line-height:1;white-space:nowrap">Styles</div><div style="position:absolute;left:723px;top:75px;width:80px;text-align:center;font-size:9.3px;color:#555;line-height:1;white-space:nowrap">Cells</div><div style="position:absolute;left:849px;top:75px;width:80px;text-align:center;font-size:9.3px;color:#555;line-height:1;white-space:nowrap">Editing</div><svg style="position:absolute;left:58px;top:77px" width="7" height="7"><path d="M0.5,0.5 H5.5 M0.5,0.5 V5.5" stroke="#888" stroke-width="1" fill="none"/><path d="M2.5,2.5 L6,6 M3.5,6 H6 V3.5" stroke="#777" stroke-width="1" fill="none"/></svg><svg style="position:absolute;left:220px;top:77px" width="7" height="7"><path d="M0.5,0.5 H5.5 M0.5,0.5 V5.5" stroke="#888" stroke-width="1" fill="none"/><path d="M2.5,2.5 L6,6 M3.5,6 H6 V3.5" stroke="#777" stroke-width="1" fill="none"/></svg><svg style="position:absolute;left:450px;top:77px" width="7" height="7"><path d="M0.5,0.5 H5.5 M0.5,0.5 V5.5" stroke="#888" stroke-width="1" fill="none"/><path d="M2.5,2.5 L6,6 M3.5,6 H6 V3.5" stroke="#777" stroke-width="1" fill="none"/></svg><svg style="position:absolute;left:560px;top:77px" width="7" height="7"><path d="M0.5,0.5 H5.5 M0.5,0.5 V5.5" stroke="#888" stroke-width="1" fill="none"/><path d="M2.5,2.5 L6,6 M3.5,6 H6 V3.5" stroke="#777" stroke-width="1" fill="none"/></svg><svg style="position:absolute;left:8px;top:18px" width="26" height="28"><rect x="2" y="4" width="19" height="20" fill="#EBC47E"/><rect x="5" y="5" width="11" height="3" fill="#6b6b6b"/><rect x="8" y="1.5" width="5" height="4" rx="2" fill="#6b6b6b"/><path d="M12.5,11.5 H20.5 L23.5,14.5 V25.5 H12.5 Z" fill="#fff" stroke="#6b6b6b" stroke-width="1"/></svg><div style="position:absolute;left:-0.5px;top:48px;width:40px;text-align:center;font-size:9.3px;color:#444;line-height:1;white-space:nowrap">Paste</div><svg style="position:absolute;left:16px;top:62px" width="6" height="4"><polygon points="0,0.5 6,0.5 3,3.5" fill="#666"/></svg><svg style="position:absolute;left:37px;top:18px" width="14" height="14"><path d="M3,1 L10,10 M11,1 L4,10" stroke="#555" stroke-width="1.3"/><circle cx="3.5" cy="11" r="2.2" fill="none" stroke="#4A7EBB" stroke-width="1.2"/><circle cx="10.5" cy="11" r="2.2" fill="none" stroke="#4A7EBB" stroke-width="1.2"/></svg><svg style="position:absolute;left:38px;top:36px" width="14" height="13"><path d="M0.5,0.5 H5 L7,2.5 V9.5 H0.5 Z" fill="#fff" stroke="#666"/><path d="M5.5,4.5 H10 L12.5,7 V12.5 H5.5 Z" fill="#fff" stroke="#666"/><rect x="7" y="8" width="4" height="3" fill="#4A7EBB"/></svg><svg style="position:absolute;left:54px;top:41px" width="6" height="4"><polygon points="0,0.5 6,0.5 3,3.5" fill="#666"/></svg><svg style="position:absolute;left:38px;top:54px" width="14" height="13"><polygon points="0,8 6,4 9,8 4,12" fill="#E8BE74"/><polygon points="6,4 11,1 13,3 9,8" fill="#555"/></svg><div style="position:absolute;left:70px;top:23px;width:121px;height:18px;background:#fff;border:1px solid #C6C6C6"></div><div style="position:absolute;left:156px;top:23px;width:1px;height:18px;background:#C6C6C6"></div><div style="position:absolute;left:73px;top:27px;font-size:9.4px;color:#222;line-height:1;white-space:nowrap">Arial</div><svg style="position:absolute;left:147px;top:30px" width="6" height="4"><polygon points="0,0.5 6,0.5 3,3.5" fill="#666"/></svg><svg style="position:absolute;left:176px;top:30px" width="6" height="4"><polygon points="0,0.5 6,0.5 3,3.5" fill="#666"/></svg><div style="position:absolute;left:159px;top:27px;font-size:9.4px;color:#222;line-height:1;white-space:nowrap">10</div><svg style="position:absolute;left:195px;top:25px" width="30" height="12"><text x="0" y="11" font-family="Liberation Sans" font-size="10.5" fill="#555">A</text><polygon points="8,3 11,3 9.5,1" fill="#4A7EBB"/><text x="18" y="11" font-family="Liberation Sans" font-size="8.5" fill="#555">A</text><polygon points="25,1 28,1 26.5,3" fill="#4A7EBB"/></svg><div style="position:absolute;left:75px;top:50.3px;font-size:10px;font-weight:700;color:#555;line-height:1">B</div><svg style="position:absolute;left:92px;top:51px" width="8" height="9"><path d="M3,0.6 H7.5 M0.5,8.4 H5 M5.2,0.6 L2.8,8.4" stroke="#555" stroke-width="1.2" fill="none"/></svg><svg style="position:absolute;left:108px;top:51px" width="9" height="11"><path d="M1.8,0.5 V5 Q1.8,7.6 4.5,7.6 Q7.2,7.6 7.2,5 V0.5" stroke="#555" stroke-width="1.5" fill="none"/><rect x="0.5" y="9.3" width="8" height="1.2" fill="#777"/></svg><svg style="position:absolute;left:123px;top:54px" width="6" height="4"><polygon points="0,0.5 6,0.5 3,3.5" fill="#666"/></svg><div style="position:absolute;left:134px;top:47px;width:1px;height:16px;background:#E1E1E1"></div><svg style="position:absolute;left:141px;top:50px" width="11" height="11"><rect x="0.5" y="0.5" width="10" height="10" fill="none" stroke="#999" stroke-dasharray="1,1"/><path d="M5.5,0 V11 M0,5.5 H11" stroke="#aaa" stroke-dasharray="1,1"/></svg><svg style="position:absolute;left:157px;top:54px" width="6" height="4"><polygon points="0,0.5 6,0.5 3,3.5" fill="#666"/></svg><div style="position:absolute;left:168px;top:47px;width:1px;height:16px;background:#E1E1E1"></div><svg style="position:absolute;left:174px;top:49px" width="14" height="15"><path d="M3,6 L7,2 L11,6 L7,10 Z" fill="#fff" stroke="#666"/><path d="M6,1 V4" stroke="#666"/><circle cx="11.5" cy="7" r="1.6" fill="#4A7EBB"/><rect x="0" y="11.5" width="13" height="3" fill="#FFFF00"/></svg><svg style="position:absolute;left:190px;top:54px" width="6" height="4"><polygon points="0,0.5 6,0.5 3,3.5" fill="#666"/></svg><svg style="position:absolute;left:201px;top:50px" width="13" height="13"><path d="M3.2,9 L6.5,1 L9.8,9 M4.4,6.2 H8.6" stroke="#555" stroke-width="1.4" fill="none"/><rect x="0" y="9.5" width="12" height="3" fill="#E00000"/></svg><svg style="position:absolute;left:217px;top:54px" width="6" height="4"><polygon points="0,0.5 6,0.5 3,3.5" fill="#666"/></svg><div style="position:absolute;left:266px;top:23px;width:17px;height:17px;background:#9FD5B0"></div><svg style="position:absolute;left:235px;top:24px" width="14" height="12"><rect x="0" y="1" width="11" height="1.2" fill="#8A8A8A"/><rect x="0" y="4" width="11" height="1.2" fill="#8A8A8A"/><rect x="0" y="7" width="11" height="1.2" fill="#8A8A8A"/></svg><svg style="position:absolute;left:252px;top:27px" width="14" height="12"><rect x="0" y="1" width="11" height="1.2" fill="#8A8A8A"/><rect x="0" y="4" width="11" height="1.2" fill="#8A8A8A"/><rect x="0" y="7" width="11" height="1.2" fill="#8A8A8A"/></svg><svg style="position:absolute;left:269px;top:30px" width="14" height="12"><rect x="0" y="1" width="11" height="1.2" fill="#666"/><rect x="0" y="4" width="11" height="1.2" fill="#666"/><rect x="0" y="7" width="11" height="1.2" fill="#666"/></svg><div style="position:absolute;left:287px;top:22px;width:1px;height:17px;background:#E1E1E1"></div><svg style="position:absolute;left:292px;top:24px" width="15" height="14"><text x="1" y="10" font-family="Liberation Sans" font-size="7.5" fill="#555" transform="rotate(-45 5 7)">ab</text><path d="M5,13 L13,5" stroke="#555" stroke-width="1.1"/><polygon points="14,4 10.5,5 13,7.5" fill="#555"/></svg><svg style="position:absolute;left:307px;top:30px" width="6" height="4"><polygon points="0,0.5 6,0.5 3,3.5" fill="#666"/></svg><div style="position:absolute;left:320px;top:22px;width:1px;height:17px;background:#E1E1E1"></div><svg style="position:absolute;left:326px;top:25px" width="14" height="11"><polygon points="0,2 4,5 0,8" fill="#4A7EBB"/><text x="5" y="9" font-family="Liberation Sans" font-size="9" font-weight="700" fill="#555">¶</text></svg><svg style="position:absolute;left:342px;top:30px" width="6" height="4"><polygon points="0,0.5 6,0.5 3,3.5" fill="#666"/></svg><div style="position:absolute;left:354px;top:22px;width:1px;height:40px;background:#E1E1E1"></div><svg style="position:absolute;left:235px;top:50px" width="14" height="12"><rect x="0" y="1" width="12" height="1.2" fill="#8A8A8A"/><rect x="0" y="4" width="8" height="1.2" fill="#8A8A8A"/><rect x="0" y="7" width="12" height="1.2" fill="#8A8A8A"/><rect x="0" y="10" width="8" height="1.2" fill="#8A8A8A"/></svg><svg style="position:absolute;left:252px;top:50px" width="14" height="12"><rect x="0" y="1" width="12" height="1.2" fill="#8A8A8A"/><rect x="2" y="4" width="8" height="1.2" fill="#8A8A8A"/><rect x="0" y="7" width="12" height="1.2" fill="#8A8A8A"/><rect x="2" y="10" width="8" height="1.2" fill="#8A8A8A"/></svg><svg style="position:absolute;left:269px;top:50px" width="14" height="12"><rect x="0" y="1" width="12" height="1.2" fill="#8A8A8A"/><rect x="4" y="4" width="8" height="1.2" fill="#8A8A8A"/><rect x="0" y="7" width="12" height="1.2" fill="#8A8A8A"/><rect x="4" y="10" width="8" height="1.2" fill="#8A8A8A"/></svg><div style="position:absolute;left:287px;top:47px;width:1px;height:17px;background:#E1E1E1"></div><svg style="position:absolute;left:293px;top:49px" width="30" height="12"><path d="M5,2 H12 M5,5 H12 M5,8 H12 M1,11 H12" stroke="#777" stroke-width="1.1"/><polygon points="0,5 4,2.5 4,7.5" fill="#4A7EBB"/><path d="M22,2 H29 M22,5 H29 M22,8 H29 M18,11 H29" stroke="#777" stroke-width="1.1"/><polygon points="21,5 17,2.5 17,7.5" fill="#4A7EBB"/></svg><svg style="position:absolute;left:359px;top:24px" width="14" height="13"><rect x="0.5" y="0.5" width="8" height="3" fill="none" stroke="#777"/><rect x="0.5" y="5.5" width="12" height="3" fill="none" stroke="#777"/><rect x="0.5" y="9.5" width="6" height="3" fill="none" stroke="#777"/><path d="M10,6 Q13,7 11,11 L8,11" stroke="#4A7EBB" fill="none"/></svg><div style="position:absolute;left:374px;top:28px;font-size:9.2px;color:#444;line-height:1;white-space:nowrap">Wrap Text</div><svg style="position:absolute;left:359px;top:49px" width="13" height="13"><rect x="0.5" y="0.5" width="12" height="12" fill="none" stroke="#777"/><path d="M0.5,4 H12.5 M0.5,9 H12.5" stroke="#777"/><path d="M3,6.5 H10" stroke="#4A7EBB"/><polygon points="2,6.5 4,5 4,8" fill="#4A7EBB"/><polygon points="11,6.5 9,5 9,8" fill="#4A7EBB"/></svg><div style="position:absolute;left:374px;top:51.5px;font-size:9.35px;color:#444;line-height:1;white-space:nowrap">Merge &amp; Center</div><svg style="position:absolute;left:447px;top:54px" width="6" height="4"><polygon points="0,0.5 6,0.5 3,3.5" fill="#666"/></svg><div style="position:absolute;left:463px;top:23px;width:103px;height:18px;background:#fff;border:1px solid #C6C6C6"></div><div style="position:absolute;left:466px;top:27.5px;font-size:8.8px;color:#222;line-height:1;white-space:nowrap">General</div><svg style="position:absolute;left:557px;top:30px" width="6" height="4"><polygon points="0,0.5 6,0.5 3,3.5" fill="#666"/></svg><svg style="position:absolute;left:465px;top:48px" width="14" height="14"><rect x="0.5" y="0.5" width="11" height="7" fill="#fff" stroke="#4A7EBB"/><circle cx="6" cy="4" r="2" fill="#4A7EBB"/><rect x="3" y="8" width="10" height="2" fill="#E8BE74"/><rect x="3" y="11" width="10" height="2" fill="#E8BE74"/></svg><svg style="position:absolute;left:481px;top:53px" width="6" height="4"><polygon points="0,0.5 6,0.5 3,3.5" fill="#666"/></svg><div style="position:absolute;left:493.5px;top:50px;font-size:11.5px;font-weight:700;color:#555;line-height:1">%</div><div style="position:absolute;left:513px;top:43.5px;font-size:13px;font-weight:700;color:#555;line-height:1">,</div><div style="position:absolute;left:527px;top:47px;width:1px;height:16px;background:#E1E1E1"></div><svg style="position:absolute;left:532px;top:48px" width="34" height="14"><text x="4" y="6" font-family="Liberation Sans" font-size="6.5" fill="#555">.0</text><text x="2" y="13" font-family="Liberation Sans" font-size="6.5" fill="#555">.00</text><path d="M0,4 H4" stroke="#4A7EBB"/><polygon points="0,4 2.5,2 2.5,6" fill="#4A7EBB"/><text x="21" y="6" font-family="Liberation Sans" font-size="6.5" fill="#555">.00</text><text x="24" y="13" font-family="Liberation Sans" font-size="6.5" fill="#555">.0</text><path d="M20,10.5 H24" stroke="#4A7EBB"/><polygon points="24,10.5 21.5,8.5 21.5,12.5" fill="#4A7EBB"/></svg><svg style="position:absolute;left:590px;top:20px" width="26" height="25"><rect x="0.5" y="0.5" width="21" height="19" fill="#fff" stroke="#999"/><path d="M0.5,5.5 H21.5 M0.5,10.5 H21.5 M0.5,15 H21.5 M6.5,0.5 V19.5 M11.5,0.5 V19.5 M16.5,0.5 V19.5" stroke="#bbb"/><rect x="6.5" y="1" width="5" height="4.5" fill="#E07A3C"/><rect x="6.5" y="6" width="9" height="4.5" fill="#4A7EBB"/><rect x="6.5" y="11" width="6" height="4" fill="#E07A3C"/><rect x="6.5" y="15.5" width="4" height="4" fill="#4A7EBB"/><rect x="11.5" y="13.5" width="13" height="11" fill="#fff" stroke="#666"/><path d="M14.5,17 H21.5 M14.5,20 H21.5 M20,15 L16,22" stroke="#333" stroke-width="1"/></svg><div style="position:absolute;left:560.5px;top:48px;width:80px;text-align:center;font-size:9.4px;color:#444;line-height:1;white-space:nowrap">Conditional</div><div style="position:absolute;left:556.0px;top:60px;width:80px;text-align:center;font-size:9.4px;color:#444;line-height:1;white-space:nowrap">Formatting</div><svg style="position:absolute;left:621px;top:63px" width="6" height="4"><polygon points="0,0.5 6,0.5 3,3.5" fill="#666"/></svg><svg style="position:absolute;left:640px;top:20px" width="26" height="25"><rect x="0.5" y="0.5" width="19" height="17" fill="#fff" stroke="#999"/><rect x="5" y="5" width="14.5" height="12.5" fill="#C9D8EC"/><path d="M0.5,4.5 H19.5 M0.5,8.5 H19.5 M0.5,12.5 H19.5 M5.5,0.5 V17.5 M10.5,0.5 V17.5 M15.5,0.5 V17.5" stroke="#aaa"/><polygon points="15,15 23,5 25.5,7 18,17" fill="#666"/><path d="M8,24 L13,17 Q15,15 17.5,16.5 Q19,19 16.5,21 Z" fill="#4A7EBB"/></svg><div style="position:absolute;left:611.0px;top:48px;width:80px;text-align:center;font-size:9.4px;color:#444;line-height:1;white-space:nowrap">Format as</div><div style="position:absolute;left:608.0px;top:60px;width:80px;text-align:center;font-size:9.4px;color:#444;line-height:1;white-space:nowrap">Table</div><svg style="position:absolute;left:659px;top:63px" width="6" height="4"><polygon points="0,0.5 6,0.5 3,3.5" fill="#666"/></svg><svg style="position:absolute;left:680px;top:20px" width="26" height="25"><rect x="0.5" y="0.5" width="19" height="17" fill="#fff" stroke="#999"/><path d="M0.5,4.5 H19.5 M0.5,13.5 H19.5 M4.5,0.5 V17.5 M15.5,0.5 V17.5" stroke="#aaa"/><rect x="5" y="5" width="10" height="8" fill="#C5D9F1"/><polygon points="15,15 23,5 25.5,7 18,17" fill="#666"/><path d="M8,24 L13,17 Q15,15 17.5,16.5 Q19,19 16.5,21 Z" fill="#4A7EBB"/></svg><div style="position:absolute;left:650.0px;top:48px;width:80px;text-align:center;font-size:9.4px;color:#444;line-height:1;white-space:nowrap">Cell</div><div style="position:absolute;left:646.0px;top:60px;width:80px;text-align:center;font-size:9.4px;color:#444;line-height:1;white-space:nowrap">Styles</div><svg style="position:absolute;left:699px;top:63px" width="6" height="4"><polygon points="0,0.5 6,0.5 3,3.5" fill="#666"/></svg><svg style="position:absolute;left:720px;top:20px" width="22" height="24"><rect x="0.5" y="0.5" width="10" height="4" fill="#fff" stroke="#777"/><rect x="0.5" y="14.5" width="10" height="8" fill="#fff" stroke="#777"/><path d="M5.5,14.5 V22.5 M0.5,18.5 H10.5" stroke="#777"/><rect x="10.5" y="7.5" width="10" height="4" fill="#C5D9F1" stroke="#777"/><path d="M2,9.5 H9" stroke="#4A7EBB" stroke-width="1.3"/><polygon points="1,9.5 4,7 4,12" fill="#4A7EBB"/></svg><div style="position:absolute;left:690.5px;top:48px;width:80px;text-align:center;font-size:9.4px;color:#444;line-height:1;white-space:nowrap">Insert</div><svg style="position:absolute;left:727px;top:63px" width="6" height="4"><polygon points="0,0.5 6,0.5 3,3.5" fill="#666"/></svg><svg style="position:absolute;left:752px;top:20px" width="24" height="24"><rect x="0.5" y="0.5" width="10" height="4" fill="#fff" stroke="#777"/><rect x="0.5" y="14.5" width="10" height="8" fill="#fff" stroke="#777"/><path d="M5.5,14.5 V22.5 M0.5,18.5 H10.5" stroke="#777"/><rect x="4.5" y="7.5" width="8" height="4" fill="#C5D9F1" stroke="#777"/><path d="M13,4 L22,13 M22,4 L13,13" stroke="#E0603C" stroke-width="1.6"/></svg><div style="position:absolute;left:723.0px;top:48px;width:80px;text-align:center;font-size:9.4px;color:#444;line-height:1;white-space:nowrap">Delete</div><svg style="position:absolute;left:760px;top:63px" width="6" height="4"><polygon points="0,0.5 6,0.5 3,3.5" fill="#666"/></svg><svg style="position:absolute;left:785px;top:19px" width="24" height="25"><path d="M1,2.5 H21" stroke="#4A7EBB"/><polygon points="0,2.5 3,0.5 3,4.5" fill="#4A7EBB"/><polygon points="22,2.5 19,0.5 19,4.5" fill="#4A7EBB"/><rect x="0.5" y="5.5" width="21" height="17" fill="#fff" stroke="#777"/><path d="M0.5,11 H21.5 M0.5,17 H21.5 M7.5,5.5 V22.5 M14.5,5.5 V22.5" stroke="#999"/><rect x="8" y="11" width="6" height="6" fill="#4A7EBB"/></svg><div style="position:absolute;left:756.0px;top:48px;width:80px;text-align:center;font-size:9.4px;color:#444;line-height:1;white-space:nowrap">Format</div><svg style="position:absolute;left:793px;top:63px" width="6" height="4"><polygon points="0,0.5 6,0.5 3,3.5" fill="#666"/></svg><svg style="position:absolute;left:823px;top:19px" width="13" height="14"><path d="M12,3 V1 H1 L6.5,6.5 L1,12 H12 V10" stroke="#444" stroke-width="1.6" fill="none"/></svg><div style="position:absolute;left:838px;top:20.5px;font-size:9.5px;color:#444;line-height:1;white-space:nowrap">AutoSum</div><svg style="position:absolute;left:883px;top:23px" width="6" height="4"><polygon points="0,0.5 6,0.5 3,3.5" fill="#666"/></svg><svg style="position:absolute;left:823px;top:37px" width="13" height="13"><rect x="0.5" y="0.5" width="11" height="11" fill="#fff" stroke="#777"/><rect x="0.5" y="0.5" width="11" height="2" fill="#777"/><path d="M6,3 V9" stroke="#4A7EBB" stroke-width="1.5"/><polygon points="3,7 9,7 6,10.5" fill="#4A7EBB"/></svg><div style="position:absolute;left:838px;top:38.5px;font-size:9.5px;color:#444;line-height:1;white-space:nowrap">Fill</div><svg style="position:absolute;left:853px;top:41px" width="6" height="4"><polygon points="0,0.5 6,0.5 3,3.5" fill="#666"/></svg><svg style="position:absolute;left:823px;top:55px" width="14" height="12"><polygon points="1,7 7,1 12,5 6,11" fill="#E88C8C"/><path d="M2,11 H13" stroke="#999"/></svg><div style="position:absolute;left:838px;top:56.5px;font-size:9.5px;color:#444;line-height:1;white-space:nowrap">Clear</div><svg style="position:absolute;left:863px;top:59px" width="6" height="4"><polygon points="0,0.5 6,0.5 3,3.5" fill="#666"/></svg><svg style="position:absolute;left:896px;top:19px" width="26" height="25"><text x="0" y="10" font-family="Liberation Sans" font-size="11.5" font-weight="700" fill="#4A7EBB">A</text><text x="0.5" y="23" font-family="Liberation Sans" font-size="11.5" font-weight="700" fill="#9A62C0">Z</text><polygon points="9,7 24,7 18,14 18,21 15,20 15,14" fill="#777"/></svg><div style="position:absolute;left:868.5px;top:48px;width:80px;text-align:center;font-size:9.4px;color:#444;line-height:1;white-space:nowrap">Sort &amp;</div><div style="position:absolute;left:866.0px;top:60px;width:80px;text-align:center;font-size:9.4px;color:#444;line-height:1;white-space:nowrap">Filter</div><svg style="position:absolute;left:917px;top:63px" width="6" height="4"><polygon points="0,0.5 6,0.5 3,3.5" fill="#666"/></svg><svg style="position:absolute;left:931px;top:19px" width="22" height="24"><rect x="2" y="2" width="4" height="6" fill="#666"/><rect x="12" y="2" width="4" height="6" fill="#666"/><rect x="0" y="8" width="8" height="13" rx="1" fill="#666"/><rect x="10" y="8" width="8" height="13" rx="1" fill="#666"/><rect x="7" y="9" width="4" height="5" fill="#888"/></svg><div style="position:absolute;left:902.5px;top:48px;width:80px;text-align:center;font-size:9.4px;color:#444;line-height:1;white-space:nowrap">Find &amp;</div><div style="position:absolute;left:900.0px;top:60px;width:80px;text-align:center;font-size:9.4px;color:#444;line-height:1;white-space:nowrap">Select</div><svg style="position:absolute;left:954px;top:63px" width="6" height="4"><polygon points="0,0.5 6,0.5 3,3.5" fill="#666"/></svg><svg style="position:absolute;left:984px;top:77px" width="9" height="6"><path d="M1,5 L4.5,1.5 L8,5" stroke="#555" stroke-width="1.4" fill="none"/></svg><div style="position:absolute;left:4px;top:94px;width:80px;height:21px;background:#fff;border:1px solid #C6C6C6"></div><div style="position:absolute;left:10px;top:101px;font-size:10px;color:#333;line-height:1;white-space:nowrap">B24</div><svg style="position:absolute;left:72px;top:103px" width="6" height="4"><polygon points="0,0.5 6,0.5 3,3.5" fill="#666"/></svg><svg style="position:absolute;left:93px;top:99px" width="3" height="12"><rect x="0.5" y="0" width="1.5" height="1.5" fill="#999"/><rect x="0.5" y="4.5" width="1.5" height="1.5" fill="#999"/><rect x="0.5" y="9" width="1.5" height="1.5" fill="#999"/></svg><div style="position:absolute;left:107px;top:94px;width:86px;height:21px;background:#fff;border:1px solid #C6C6C6"></div><svg style="position:absolute;left:117px;top:99px" width="10" height="10"><path d="M1,1 L9,9 M9,1 L1,9" stroke="#B5B5B5" stroke-width="1.2"/></svg><svg style="position:absolute;left:144px;top:99px" width="12" height="10"><path d="M1,5 L4.5,8.5 L11,1.5" stroke="#B5B5B5" stroke-width="1.4" fill="none"/></svg><div style="position:absolute;left:174px;top:98px;font-size:12px;font-style:italic;color:#555;line-height:1;font-family:'Liberation Serif'">f<span style="font-size:9px;margin-left:-1px">x</span></div><div style="position:absolute;left:195px;top:94px;width:801px;height:21px;background:#fff;border:1px solid #C6C6C6"></div><svg style="position:absolute;left:986px;top:102px" width="8" height="5"><path d="M1,1 L4,4 L7,1" stroke="#555" stroke-width="1.4" fill="none"/></svg><div style="position:absolute;left:0px;top:713px;width:1000px;height:21px;background:#F0F0F0"></div><div style="position:absolute;left:0px;top:712px;width:984px;height:1px;background:#C6C6C6"></div><svg style="position:absolute;left:20px;top:719px" width="30" height="9"><polygon points="5,1 5,8 1.5,4.5" fill="#BDBDBD"/><polygon points="22,1 22,8 25.5,4.5" fill="#BDBDBD"/></svg><div style="position:absolute;left:79px;top:715px;width:1px;height:16px;background:#C6C6C6"></div><div style="position:absolute;left:79px;top:718px;width:47px;text-align:center;font-size:9.9px;color:#444;line-height:1;white-space:nowrap">Aria 1</div><div style="position:absolute;left:126px;top:715px;width:1px;height:16px;background:#C6C6C6"></div><div style="position:absolute;left:126px;top:718px;width:46.5px;text-align:center;font-size:9.9px;color:#444;line-height:1;white-space:nowrap">Aria 2</div><div style="position:absolute;left:172px;top:715px;width:1px;height:16px;background:#C6C6C6"></div><div style="position:absolute;left:172.5px;top:718px;width:47.5px;text-align:center;font-size:9.9px;color:#444;line-height:1;white-space:nowrap">Aria 3</div><div style="position:absolute;left:220px;top:715px;width:1px;height:16px;background:#C6C6C6"></div><div style="position:absolute;left:220px;top:718px;width:46px;text-align:center;font-size:9.9px;color:#444;line-height:1;white-space:nowrap">Aria 4</div><div style="position:absolute;left:266px;top:715px;width:1px;height:16px;background:#C6C6C6"></div><div style="position:absolute;left:266px;top:718px;width:47.5px;text-align:center;font-size:9.9px;color:#444;line-height:1;white-space:nowrap">Aria 5</div><div style="position:absolute;left:313px;top:715px;width:1px;height:16px;background:#C6C6C6"></div><div style="position:absolute;left:313.5px;top:718px;width:46.5px;text-align:center;font-size:9.9px;color:#444;line-height:1;white-space:nowrap">Aria 6</div><div style="position:absolute;left:360px;top:715px;width:1px;height:16px;background:#C6C6C6"></div><div style="position:absolute;left:360px;top:718px;width:46.5px;text-align:center;font-size:9.9px;color:#444;line-height:1;white-space:nowrap">Aria 7</div><div style="position:absolute;left:406px;top:715px;width:1px;height:16px;background:#C6C6C6"></div><div style="position:absolute;left:406.5px;top:718px;width:47.0px;text-align:center;font-size:9.9px;color:#444;line-height:1;white-space:nowrap">Aria 8</div><div style="position:absolute;left:453px;top:715px;width:1px;height:16px;background:#C6C6C6"></div><div style="position:absolute;left:453.5px;top:718px;width:47.0px;text-align:center;font-size:9.9px;color:#444;line-height:1;white-space:nowrap">Aria 9</div><div style="position:absolute;left:500px;top:715px;width:1px;height:16px;background:#C6C6C6"></div><div style="position:absolute;left:500.5px;top:718px;width:52.0px;text-align:center;font-size:9.9px;color:#444;line-height:1;white-space:nowrap">Aria 10</div><div style="position:absolute;left:552px;top:712px;width:44px;height:20px;background:#fff;border-left:1px solid #C6C6C6;border-right:1px solid #C6C6C6"></div><div style="position:absolute;left:552px;top:730px;width:44px;height:2px;background:#217346"></div><div style="position:absolute;left:552px;top:718px;width:44px;text-align:center;font-size:10.2px;font-weight:700;color:#217346;line-height:1">Main</div><div style="position:absolute;left:596px;top:718px;width:38px;text-align:center;font-size:9.9px;color:#444;line-height:1;white-space:nowrap">lock</div><div style="position:absolute;left:634px;top:718px;width:41.5px;text-align:center;font-size:9.9px;color:#444;line-height:1;white-space:nowrap">links</div><div style="position:absolute;left:675.5px;top:718px;width:55.10000000000002px;text-align:center;font-size:9.9px;color:#444;line-height:1;white-space:nowrap">NC-Calc</div><div style="position:absolute;left:634px;top:715px;width:1px;height:16px;background:#C6C6C6"></div><div style="position:absolute;left:675px;top:715px;width:1px;height:16px;background:#C6C6C6"></div><div style="position:absolute;left:730px;top:715px;width:1px;height:16px;background:#C6C6C6"></div><svg style="position:absolute;left:757px;top:717px" width="13" height="13"><circle cx="6.5" cy="6.5" r="5.6" fill="none" stroke="#555" stroke-width="1.1"/><path d="M6.5,3.3 V9.7 M3.3,6.5 H9.7" stroke="#555" stroke-width="1.2"/></svg><svg style="position:absolute;left:881px;top:718px" width="3" height="10"><rect x="0.5" y="0" width="1.4" height="1.4" fill="#999"/><rect x="0.5" y="4" width="1.4" height="1.4" fill="#999"/><rect x="0.5" y="8" width="1.4" height="1.4" fill="#999"/></svg><div style="position:absolute;left:895px;top:718px;width:89px;height:11px;background:#E6E6E6"></div><div style="position:absolute;left:895px;top:718px;width:12px;height:11px;background:#fff;border:1px solid #BDBDBD"></div><div style="position:absolute;left:906px;top:718px;width:18px;height:11px;background:#fff;border:1px solid #BDBDBD"></div><div style="position:absolute;left:972px;top:718px;width:12px;height:11px;background:#fff;border:1px solid #BDBDBD"></div><svg style="position:absolute;left:895px;top:718px" width="12" height="11"><polygon points="7.5,2.5 7.5,8.5 4.5,5.5" fill="#444"/></svg><svg style="position:absolute;left:972px;top:718px" width="12" height="11"><polygon points="4.5,2.5 4.5,8.5 7.5,5.5" fill="#444"/></svg><div style="position:absolute;left:0px;top:734px;width:1000px;height:16px;background:#217346"></div><div style="position:absolute;left:6px;top:738.5px;font-size:8.2px;color:#fff;line-height:1;letter-spacing:-0.1px">READY</div><svg style="position:absolute;left:46px;top:736px" width="12" height="12"><rect x="0" y="0" width="4" height="4" rx="2" fill="#fff"/><rect x="2.5" y="3.5" width="9" height="8" fill="none" stroke="#fff"/><path d="M2.5,6.5 H11.5 M2.5,9 H11.5 M5.5,3.5 V11.5 M8.5,3.5 V11.5" stroke="#fff" stroke-width="0.8"/></svg><div style="position:absolute;left:155px;top:735px;width:67px;height:15px;background:#fff;border:1px solid #BDBDBD;border-bottom:none"></div><div style="position:absolute;left:155px;top:739px;width:67px;text-align:center;font-size:8.8px;color:#444;line-height:1;white-space:nowrap">Publisher 2013</div><div style="position:absolute;left:772px;top:734px;width:30px;height:16px;background:#1A5C38"></div><svg style="position:absolute;left:781px;top:737px" width="12" height="11"><rect x="0.5" y="0.5" width="11" height="10" fill="none" stroke="#fff" stroke-width="0.9"/><path d="M0.5,3.8 H11.5 M0.5,7.2 H11.5 M4.2,0.5 V10.5 M7.8,0.5 V10.5" stroke="#fff" stroke-width="0.9"/></svg><svg style="position:absolute;left:811px;top:737px" width="12" height="11"><rect x="0.5" y="0.5" width="11" height="10" fill="none" stroke="#fff" stroke-width="0.9"/><rect x="3" y="3" width="6" height="5" fill="none" stroke="#fff" stroke-width="0.9"/></svg><svg style="position:absolute;left:840px;top:737px" width="12" height="11"><rect x="0.5" y="0.5" width="11" height="10" fill="none" stroke="#fff" stroke-width="0.9"/><rect x="2" y="1" width="3" height="5" fill="#fff"/><rect x="7" y="1" width="3" height="5" fill="#fff"/></svg><div style="position:absolute;left:865px;top:742px;width:5px;height:1.5px;background:#fff"></div><div style="position:absolute;left:873px;top:742px;width:78px;height:1px;background:#fff"></div><div style="position:absolute;left:910px;top:737px;width:3px;height:11px;background:#fff"></div><svg style="position:absolute;left:953px;top:739px" width="8" height="8"><path d="M4,0 V8 M0,4 H8" stroke="#fff" stroke-width="1.6"/></svg><div style="position:absolute;left:971px;top:739px;font-size:8.4px;color:#fff;line-height:1">100%</div><div style="position:absolute;left:774px;top:681px;font-size:15.5px;color:rgba(120,120,120,0.45);line-height:1;white-space:nowrap">Activate Windows</div><div style="position:absolute;left:774px;top:700.5px;font-size:11.7px;color:rgba(120,120,120,0.45);line-height:1;white-space:nowrap">Go to Settings to activate Windows.</div></body></html>
